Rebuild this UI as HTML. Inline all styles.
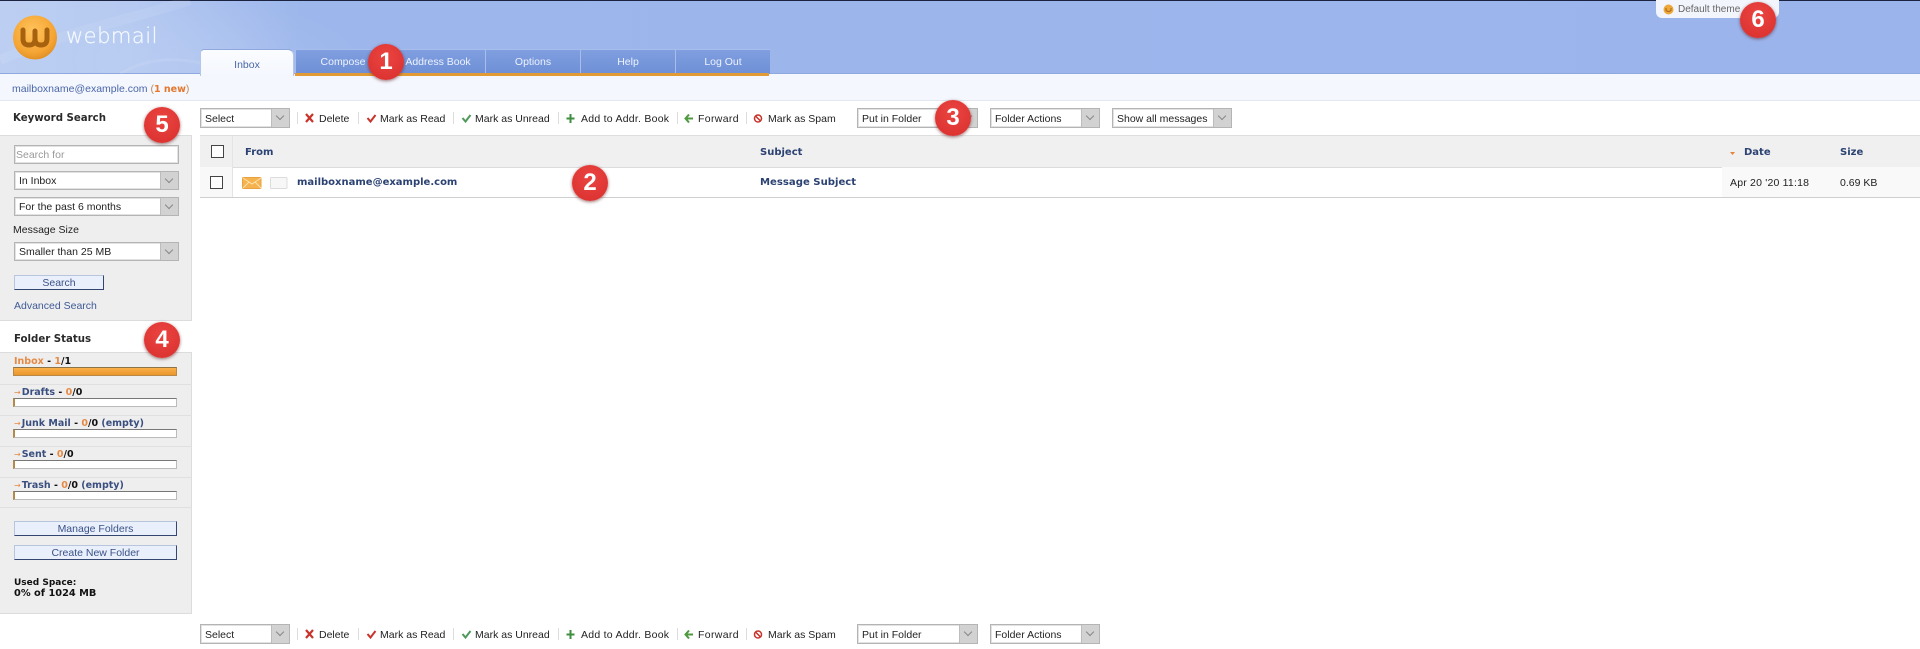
<!DOCTYPE html>
<html><head><meta charset="utf-8"><title>Webmail</title>
<style>
html,body{margin:0;padding:0;background:#fff}
body{position:relative;width:1920px;height:649px;overflow:hidden;font:10.500px/14px "Liberation Sans",Arial,sans-serif;color:#222}
.a{position:absolute;white-space:nowrap}
.b{font-family:"DejaVu Sans",sans-serif;font-weight:bold;font-size:10px;color:#2b4272}
.h{color:#2a2a2a;font-size:10.200px}
.f{font-size:9.500px;color:#3a4f80}
.s{position:absolute;box-sizing:border-box;height:20px;border:1px solid #b4b4b4;background:#fff;padding-left:4px;line-height:20px;color:#222;overflow:hidden;box-shadow:inset 0 0 0 1px #e2e2e2}
.s i{position:absolute;right:0;top:0;bottom:0;width:17px;background:#d2d2d2;border-left:1px solid #bdbdbd}
.s i:after{content:"";position:absolute;left:5px;top:4px;width:5px;height:5px;border-right:1px solid #888;border-bottom:1px solid #888;transform:rotate(45deg)}
.side{height:19px;line-height:19px;padding-left:4px}
.tab{position:absolute;top:49px;width:94px;height:24px;text-align:center;line-height:25px;color:#edf2fd;background:linear-gradient(#7f9fe0,#6f8fd6);border-left:1px solid #a9bdec;border-top:1px solid #a9bdec;box-sizing:content-box}
.line{position:absolute;top:73px;height:3px;background:#e29a35}
.btn{position:absolute;box-sizing:border-box;background:#e9effb;border:1px solid #b9c4dd;border-right:1px solid #33466f;border-bottom:1px solid #33466f;text-align:center;color:#3a5288;line-height:15px}
.d{position:absolute;width:1px;height:12px;background:#ddd}
.bar{position:absolute;left:13px;width:164px;height:9px;box-sizing:border-box;background:#fff;border:1px solid #bbb;border-top-color:#777;border-left:2px solid #b48a4a}
.sep{position:absolute;left:0;width:192px;height:1px;background:#e0e0e0}
.o{color:#e58a45}.k{color:#111}
.ar{color:#e58a45;font-weight:normal;font-size:8px;margin-right:1px}
.badge{position:absolute;width:36px;height:36px;border-radius:50%;background:radial-gradient(circle at 50% 35%,#ea4440,#d92f2e);box-shadow:0 1px 3px rgba(90,20,20,.6);color:#fff;font:bold 24px/36px "Liberation Sans",Arial,sans-serif;text-align:center}
svg{position:absolute;overflow:visible}
</style></head><body>

<!-- header -->
<div class="a" style="left:0;top:0;width:1920px;height:74px;background:radial-gradient(ellipse 150px 60px at 215px 62px,rgba(255,255,255,.1),rgba(255,255,255,0) 100%),linear-gradient(90deg,#bccff2 0,#b6caf1 130px,#9db7ec 300px,#9bb4ec 100%)"></div>
<div class="a" style="left:0;top:0;width:1920px;height:1px;background:#1c2340"></div>
<div class="a" style="left:0;top:73px;width:1920px;height:1px;background:#8ea8e0"></div>
<svg style="left:0;top:0" width="300" height="74"><path d="M0 60 C70 30 130 20 190 0" stroke="#fff" stroke-opacity=".08" stroke-width="10" fill="none"/><path d="M120 74 C150 55 190 55 235 74" stroke="#fff" stroke-opacity=".09" stroke-width="3" fill="none"/></svg>
<!-- logo -->
<svg style="left:0;top:0" width="70" height="70">
<defs><radialGradient id="g" cx=".45" cy=".35" r=".7"><stop offset="0" stop-color="#ffc45c"/><stop offset=".7" stop-color="#f5a534"/><stop offset="1" stop-color="#dd8a20"/></radialGradient></defs>
<circle cx="35" cy="37.500" r="22" fill="url(#g)"/>
<path d="M23 30 V39 Q23 45 29 45 Q35 45 35 39 V31 M35 39 Q35 45 41 45 Q47 45 47 39 V30" stroke="#a7620f" stroke-width="5" fill="none" stroke-linecap="round"/>
</svg>
<div class="a" style="left:66px;top:16px;font:300 21px/40px 'DejaVu Sans',sans-serif;color:#f4f8ff;letter-spacing:.5px;-webkit-text-stroke:.3px #f4f8ff">webmail</div>

<!-- subheader -->
<div class="a" style="left:0;top:74px;width:1920px;height:26px;background:#f4f7fe;border-bottom:1px solid #e4e7ef"></div>
<div class="a" style="left:12px;top:82px;color:#4a66a8;font-size:10.500px">mailboxname@example.com <span style="color:#c08a50">(</span><b style="color:#e5762c;font-family:'DejaVu Sans',sans-serif;font-size:9.500px">1 new</b><span style="color:#c08a50">)</span></div>

<!-- tabs -->
<div class="a" style="left:200px;top:49px;width:94px;height:27px;background:linear-gradient(#fafcff,#f4f7fe);border-top:1px solid #8fa7dc;border-left:1px solid #b6c6ea;border-right:1px solid #b6c6ea;border-radius:4px 6px 0 0;box-sizing:border-box;text-align:center;line-height:30px;color:#4a66a8">Inbox</div>
<div class="tab" style="left:295px">Compose</div>
<div class="tab" style="left:390px">Address Book</div>
<div class="tab" style="left:485px">Options</div>
<div class="tab" style="left:580px">Help</div>
<div class="tab" style="left:675px">Log Out</div>
<div class="line" style="left:295px;width:474px"></div>

<!-- theme -->
<div class="a" style="left:1656px;top:0;width:123px;height:18px;background:#f2f5fc;border-radius:0 0 6px 6px"></div>
<svg style="left:1663px;top:4px" width="11" height="11"><circle cx="5.500" cy="5.500" r="5" fill="#eda83c"/><path d="M3 4 V6.500 Q5.500 8.500 8 6.500 V4" stroke="#a9650f" fill="none"/></svg>
<div class="a" style="left:1678px;top:3px;font-size:10px;color:#666">Default theme</div>

<!-- sidebar search -->
<div class="a b h" style="left:13px;top:112px">Keyword Search</div>
<div class="a" style="left:0;top:135px;width:192px;height:186px;background:#eeeeee;border:1px solid #dcdcdc;border-left:0;box-sizing:border-box"></div>
<div class="s side" style="left:14px;top:145px;width:165px;padding-left:1px;color:#999;background:#fff">Search for</div>
<div class="s side" style="left:14px;top:171px;width:165px">In Inbox<i></i></div>
<div class="s side" style="left:14px;top:197px;width:165px">For the past 6 months<i></i></div>
<div class="a" style="left:13px;top:223px;color:#222">Message Size</div>
<div class="s side" style="left:14px;top:242px;width:165px">Smaller than 25 MB<i></i></div>
<div class="btn" style="left:14px;top:275px;width:90px;height:15px">Search</div>
<div class="a" style="left:14px;top:299px;color:#3f5a96">Advanced Search</div>

<!-- folder status -->
<div class="a b h" style="left:14px;top:333px">Folder Status</div>
<div class="a" style="left:0;top:352px;width:192px;height:262px;background:#eeeeee;border:1px solid #dcdcdc;border-left:0;box-sizing:border-box"></div>
<div class="a b f" style="left:14px;top:355px"><span class="o">Inbox</span> <span class="k">- <span class="o">1</span>/1</span></div>
<div class="a" style="left:13px;top:367px;width:164px;height:9px;background:linear-gradient(#fbb048,#e9952c);border:1px solid #b98a45;border-top-color:#8c7448;box-sizing:border-box"></div>
<div class="sep" style="top:384px"></div>
<div class="a b f" style="left:14px;top:386px"><span class="ar">→</span>Drafts <span class="k">- <span class="o">0</span>/0</span></div>
<div class="bar" style="top:398px"></div>
<div class="sep" style="top:415px"></div>
<div class="a b f" style="left:14px;top:417px"><span class="ar">→</span>Junk Mail <span class="k">- <span class="o">0</span>/0</span> (empty)</div>
<div class="bar" style="top:429px"></div>
<div class="sep" style="top:446px"></div>
<div class="a b f" style="left:14px;top:448px"><span class="ar">→</span>Sent <span class="k">- <span class="o">0</span>/0</span></div>
<div class="bar" style="top:460px"></div>
<div class="sep" style="top:477px"></div>
<div class="a b f" style="left:14px;top:479px"><span class="ar">→</span>Trash <span class="k">- <span class="o">0</span>/0</span> (empty)</div>
<div class="bar" style="top:491px"></div>
<div class="sep" style="top:507px"></div>
<div class="btn" style="left:14px;top:521px;width:163px;height:15px">Manage Folders</div>
<div class="btn" style="left:14px;top:545px;width:163px;height:15px">Create New Folder</div>
<div class="a b k" style="left:14px;top:576px;font-size:9px;color:#111">Used Space:</div>
<div class="a b k" style="left:14px;top:587px;font-size:9.800px;color:#111">0% of 1024 MB</div>

<!-- top toolbar -->
<div class="s" style="left:200px;top:108px;width:90px">Select<i></i></div>
<div class="d" style="left:297px;top:112px"></div>
<svg style="left:304px;top:112px" width="11" height="12"><path d="M2 2 L9 10 M9 2 L2 10" stroke="#c8332a" stroke-width="2.200"/></svg>
<div class="a" style="left:319px;top:112px">Delete</div>
<div class="d" style="left:358px;top:112px"></div>
<svg style="left:366px;top:112px" width="11" height="12"><path d="M1.500 6 L4.500 9.500 L9.500 3" stroke="#c8332a" stroke-width="2" fill="none"/></svg>
<div class="a" style="left:380px;top:112px">Mark as Read</div>
<div class="d" style="left:453px;top:112px"></div>
<svg style="left:461px;top:112px" width="11" height="12"><path d="M1.500 6 L4.500 9.500 L9.500 3" stroke="#4f9a5a" stroke-width="2" fill="none"/></svg>
<div class="a" style="left:475px;top:112px">Mark as Unread</div>
<div class="d" style="left:558px;top:112px"></div>
<svg style="left:566px;top:112px" width="10" height="12"><path d="M4.500 2 V11 M0.500 6.500 H8.500" stroke="#3f8f3f" stroke-width="2"/></svg>
<div class="a" style="left:581px;top:112px;letter-spacing:.25px">Add to Addr. Book</div>
<div class="d" style="left:677px;top:112px"></div>
<svg style="left:684px;top:112px" width="10" height="12"><path d="M5 2.500 L1.500 6.500 L5 10.500 M2 6.500 H9" stroke="#4f9a3f" stroke-width="2" fill="none"/></svg>
<div class="a" style="left:698px;top:112px;letter-spacing:.35px">Forward</div>
<div class="d" style="left:746px;top:112px"></div>
<svg style="left:753px;top:112px" width="11" height="12"><circle cx="5" cy="6.500" r="3.500" stroke="#c8332a" stroke-width="1.500" fill="none"/><path d="M2.500 4 L7.500 9" stroke="#c8332a" stroke-width="1.500"/></svg>
<div class="a" style="left:768px;top:112px">Mark as Spam</div>
<div class="s" style="left:857px;top:108px;width:121px">Put in Folder<i></i></div>
<div class="s" style="left:990px;top:108px;width:110px">Folder Actions<i></i></div>
<div class="s" style="left:1112px;top:108px;width:120px">Show all messages<i></i></div>

<!-- table -->
<div class="a" style="left:200px;top:135px;width:1720px;height:31px;background:#f0f0f0;border-top:1px solid #dedede;border-bottom:1px solid #dcdcdc"></div>
<div class="a" style="left:200px;top:167px;width:32px;height:30px;background:#f8f8f8"></div>
<div class="a" style="left:1722px;top:167px;width:198px;height:30px;background:#f9f9f9"></div>
<div class="a" style="left:200px;top:197px;width:1720px;height:1px;background:#cfcfcf"></div>
<div class="a" style="left:232px;top:136px;width:1px;height:61px;background:#e4e4e4"></div>
<div class="a" style="left:211px;top:145px;width:13px;height:13px;background:#fff;border:1px solid #444;box-sizing:border-box"></div>
<div class="a" style="left:210px;top:176px;width:13px;height:13px;background:#fff;border:1px solid #444;box-sizing:border-box"></div>
<div class="a b" style="left:245px;top:146px">From</div>
<div class="a b" style="left:760px;top:146px">Subject</div>
<div class="a b" style="left:1744px;top:146px">Date</div>
<div class="a b" style="left:1840px;top:146px">Size</div>
<svg style="left:1729px;top:151px" width="8" height="6"><path d="M1 1 H6 L3.500 4 Z" fill="#e5843a"/></svg>
<svg style="left:242px;top:177px" width="20" height="12"><rect x=".5" y=".5" width="18.500" height="11" rx="1" fill="#f5b34f" stroke="#e9a23f"/><path d="M1 1 L10 7 L19 1 M1 11 L7 5 M19 11 L13 5" stroke="#fde2ac" fill="none"/></svg>
<svg style="left:270px;top:177px" width="18" height="12"><rect x=".5" y=".5" width="16.500" height="11" rx="1" fill="#f7f7f7" stroke="#dcdcdc"/></svg>
<div class="a b" style="left:297px;top:176px;font-size:10px">mailboxname@example.com</div>
<div class="a b" style="left:760px;top:176px;font-size:10.100px">Message Subject</div>
<div class="a" style="left:1730px;top:176px;letter-spacing:.2px">Apr 20 '20 11:18</div>
<div class="a" style="left:1840px;top:176px">0.69 KB</div>

<!-- bottom toolbar -->
<div class="s" style="left:200px;top:624px;width:90px">Select<i></i></div>
<div class="d" style="left:297px;top:628px"></div>
<svg style="left:304px;top:628px" width="11" height="12"><path d="M2 2 L9 10 M9 2 L2 10" stroke="#c8332a" stroke-width="2.200"/></svg>
<div class="a" style="left:319px;top:628px">Delete</div>
<div class="d" style="left:358px;top:628px"></div>
<svg style="left:366px;top:628px" width="11" height="12"><path d="M1.500 6 L4.500 9.500 L9.500 3" stroke="#c8332a" stroke-width="2" fill="none"/></svg>
<div class="a" style="left:380px;top:628px">Mark as Read</div>
<div class="d" style="left:453px;top:628px"></div>
<svg style="left:461px;top:628px" width="11" height="12"><path d="M1.500 6 L4.500 9.500 L9.500 3" stroke="#4f9a5a" stroke-width="2" fill="none"/></svg>
<div class="a" style="left:475px;top:628px">Mark as Unread</div>
<div class="d" style="left:558px;top:628px"></div>
<svg style="left:566px;top:628px" width="10" height="12"><path d="M4.500 2 V11 M0.500 6.500 H8.500" stroke="#3f8f3f" stroke-width="2"/></svg>
<div class="a" style="left:581px;top:628px;letter-spacing:.25px">Add to Addr. Book</div>
<div class="d" style="left:677px;top:628px"></div>
<svg style="left:684px;top:628px" width="10" height="12"><path d="M5 2.500 L1.500 6.500 L5 10.500 M2 6.500 H9" stroke="#4f9a3f" stroke-width="2" fill="none"/></svg>
<div class="a" style="left:698px;top:628px;letter-spacing:.35px">Forward</div>
<div class="d" style="left:746px;top:628px"></div>
<svg style="left:753px;top:628px" width="11" height="12"><circle cx="5" cy="6.500" r="3.500" stroke="#c8332a" stroke-width="1.500" fill="none"/><path d="M2.500 4 L7.500 9" stroke="#c8332a" stroke-width="1.500"/></svg>
<div class="a" style="left:768px;top:628px">Mark as Spam</div>
<div class="s" style="left:857px;top:624px;width:121px">Put in Folder<i></i></div>
<div class="s" style="left:990px;top:624px;width:110px">Folder Actions<i></i></div>

<!-- badges -->
<div class="badge" style="left:368px;top:44px">1</div>
<div class="badge" style="left:572px;top:165px">2</div>
<div class="badge" style="left:935px;top:100px">3</div>
<div class="badge" style="left:144px;top:322px">4</div>
<div class="badge" style="left:144px;top:107px">5</div>
<div class="badge" style="left:1740px;top:2px">6</div>
</body></html>
